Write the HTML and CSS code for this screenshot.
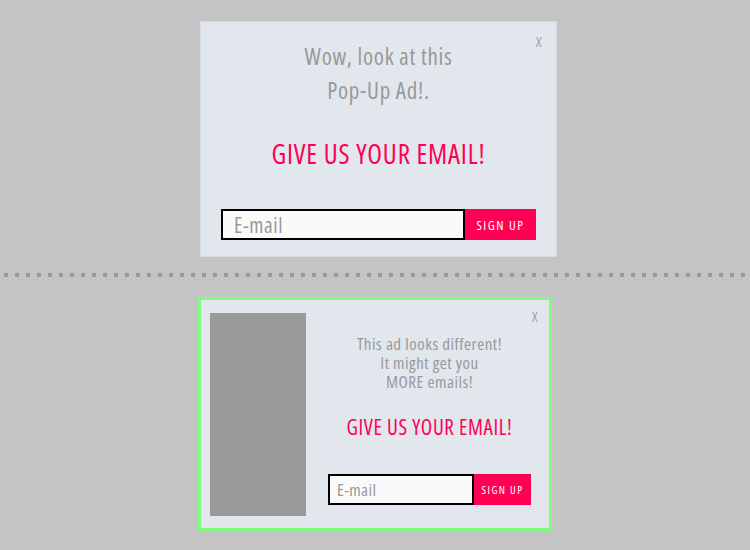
FILE: index.html
```html
<!DOCTYPE html>
<html lang="en">
<head>
    <meta charset="UTF-8">
    <title>Pop-Up Ads</title>
    <link rel="stylesheet" href="styles.css">
</head>
<body>
    <div class="popup popup-plain">
        <span class="close">x</span>
        <h2 class="pitch">Wow, look at this<br>Pop-Up Ad!.</h2>
        <h3 class="ask">GIVE US YOUR EMAIL!</h3>
        <form class="signup">
            <input type="text" placeholder="E-mail">
            <button type="button">SIGN UP</button>
        </form>
    </div>

    <hr class="divider">

    <div class="popup popup-new">
        <span class="close">x</span>
        <div class="picture"></div>
        <div class="copy">
            <p class="pitch">This ad looks different!<br>It might get you<br>MORE emails!</p>
            <h3 class="ask">GIVE US YOUR EMAIL!</h3>
            <form class="signup">
                <input type="text" placeholder="E-mail">
                <button type="button">SIGN UP</button>
            </form>
        </div>
    </div>
</body>
</html>
```

FILE: styles.css
```css
body { margin: 0; padding-top: 21px; background: #c4c4c4; font-family: "Open Sans", "Noto Sans", sans-serif; font-stretch: condensed; }
.popup { position: relative; background: #e2e7ee; box-sizing: border-box; }
.close { position: absolute; top: 5px; right: 14px; color: #999; font-size: 19px; font-weight: 300; }
.pitch { margin: 0; color: #999; font-weight: 500; text-align: center; }
.ask { margin: 0; color: #ff0055; font-weight: 500; text-align: center; }
.signup { display: flex; height: 31px; }
.signup input { flex: 1; width: 0; min-width: 0; box-sizing: border-box; height: 31px; border: 2px solid #000; background: #fafafa; padding: 0 0 0 11px; font-family: inherit; font-stretch: inherit; font-weight: 500; color: #333; outline: none; }
.signup input::placeholder { color: #999; }
.signup button { flex: none; height: 31px; border: none; background: #ff0055; color: #fff; font-family: inherit; font-stretch: inherit; font-weight: 500; letter-spacing: 1.5px; padding: 0; cursor: pointer; }

/* first version */
.popup-plain { width: 357px; height: 236px; margin-left: 200px; padding: 17px 20px 0; border: 1px solid #d6dae0; }
.popup-plain .pitch { font-size: 23px; line-height: 34px; letter-spacing: 0.7px; }
.popup-plain .ask { font-size: 27px; line-height: 30px; letter-spacing: 0.8px; margin-top: 32px; }
.popup-plain .signup { margin-top: 40px; }
.popup-plain .signup input { font-size: 21px; letter-spacing: 0.6px; }
.popup-plain .signup button { width: 71px; font-size: 13px; }

.divider { margin: 16px 0 0; height: 4px; border: none; background: repeating-linear-gradient(90deg, transparent 0 4px, #999 4px 8px, transparent 8px 11px); }

/* second version */
.popup-new { display: flex; gap: 22px; width: 354px; height: 234px; margin: 20px 0 0 198px; padding: 13px 18px 12px 9px; border: 3px solid #7dff7d; }
.popup-new .close { top: 2px; right: 11px; }
.picture { flex: none; width: 96px; background: #999; }
.copy { flex: 1; min-width: 0; padding-top: 21px; }
.popup-new .pitch { font-size: 17px; line-height: 19px; letter-spacing: 0.5px; }
.popup-new .ask { font-size: 21px; line-height: 24px; letter-spacing: 0.6px; margin-top: 24px; }
.popup-new .signup { margin-top: 35px; }
.popup-new .signup input { font-size: 17px; letter-spacing: 0.4px; padding-left: 7px; }
.popup-new .signup button { width: 57px; font-size: 11px; }
```
